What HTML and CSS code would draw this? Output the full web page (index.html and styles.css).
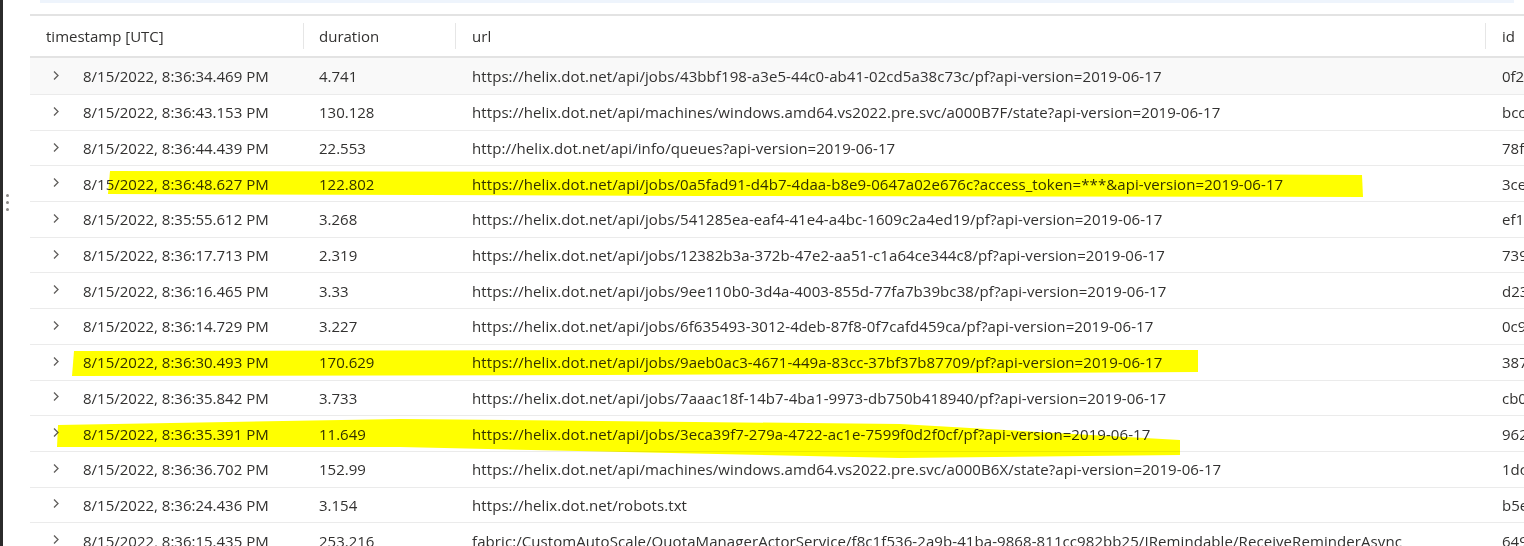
FILE: index.html
```html
<!DOCTYPE html>
<html>
<head>
<meta charset="utf-8">
<link rel="stylesheet" href="styles.css">
</head>
<body>
<div class="frame">
  <div class="edge"></div>
  <div class="handle"><span></span><span></span><span></span></div>
  <div class="main">
    <div class="topband"></div>
    <div class="grid">
      <div class="row head">
        <div class="c ts">timestamp [UTC]</div>
        <div class="c du"><i class="sep"></i>duration</div>
        <div class="c ur"><i class="sep"></i>url</div>
        <div class="c id"><i class="sep"></i>id</div>
      </div>
      <div class="row first"><div class="c ts"><svg class="chev" width="8" height="11" viewBox="0 0 8 11"><path d="M2 1.5 L6 5.5 L2 9.5"/></svg>8/15/2022, 8:36:34.469 PM</div><div class="c du">4.741</div><div class="c ur">https://helix.dot.net/api/jobs/43bbf198-a3e5-44c0-ab41-02cd5a38c73c/pf?api-version=2019-06-17</div><div class="c id">0f2</div></div>
      <div class="row"><div class="c ts"><svg class="chev" width="8" height="11" viewBox="0 0 8 11"><path d="M2 1.5 L6 5.5 L2 9.5"/></svg>8/15/2022, 8:36:43.153 PM</div><div class="c du">130.128</div><div class="c ur">https://helix.dot.net/api/machines/windows.amd64.vs2022.pre.svc/a000B7F/state?api-version=2019-06-17</div><div class="c id">bcc</div></div>
      <div class="row"><div class="c ts"><svg class="chev" width="8" height="11" viewBox="0 0 8 11"><path d="M2 1.5 L6 5.5 L2 9.5"/></svg>8/15/2022, 8:36:44.439 PM</div><div class="c du">22.553</div><div class="c ur">http://helix.dot.net/api/info/queues?api-version=2019-06-17</div><div class="c id">78f</div></div>
      <div class="row"><div class="c ts"><svg class="chev" width="8" height="11" viewBox="0 0 8 11"><path d="M2 1.5 L6 5.5 L2 9.5"/></svg>8/15/2022, 8:36:48.627 PM</div><div class="c du">122.802</div><div class="c ur">https://helix.dot.net/api/jobs/0a5fad91-d4b7-4daa-b8e9-0647a02e676c?access_token=***&amp;api-version=2019-06-17</div><div class="c id">3ce</div></div>
      <div class="row"><div class="c ts"><svg class="chev" width="8" height="11" viewBox="0 0 8 11"><path d="M2 1.5 L6 5.5 L2 9.5"/></svg>8/15/2022, 8:35:55.612 PM</div><div class="c du">3.268</div><div class="c ur">https://helix.dot.net/api/jobs/541285ea-eaf4-41e4-a4bc-1609c2a4ed19/pf?api-version=2019-06-17</div><div class="c id">ef1</div></div>
      <div class="row"><div class="c ts"><svg class="chev" width="8" height="11" viewBox="0 0 8 11"><path d="M2 1.5 L6 5.5 L2 9.5"/></svg>8/15/2022, 8:36:17.713 PM</div><div class="c du">2.319</div><div class="c ur">https://helix.dot.net/api/jobs/12382b3a-372b-47e2-aa51-c1a64ce344c8/pf?api-version=2019-06-17</div><div class="c id">739</div></div>
      <div class="row"><div class="c ts"><svg class="chev" width="8" height="11" viewBox="0 0 8 11"><path d="M2 1.5 L6 5.5 L2 9.5"/></svg>8/15/2022, 8:36:16.465 PM</div><div class="c du">3.33</div><div class="c ur">https://helix.dot.net/api/jobs/9ee110b0-3d4a-4003-855d-77fa7b39bc38/pf?api-version=2019-06-17</div><div class="c id">d23</div></div>
      <div class="row"><div class="c ts"><svg class="chev" width="8" height="11" viewBox="0 0 8 11"><path d="M2 1.5 L6 5.5 L2 9.5"/></svg>8/15/2022, 8:36:14.729 PM</div><div class="c du">3.227</div><div class="c ur">https://helix.dot.net/api/jobs/6f635493-3012-4deb-87f8-0f7cafd459ca/pf?api-version=2019-06-17</div><div class="c id">0c9</div></div>
      <div class="row"><div class="c ts"><svg class="chev" width="8" height="11" viewBox="0 0 8 11"><path d="M2 1.5 L6 5.5 L2 9.5"/></svg>8/15/2022, 8:36:30.493 PM</div><div class="c du">170.629</div><div class="c ur">https://helix.dot.net/api/jobs/9aeb0ac3-4671-449a-83cc-37bf37b87709/pf?api-version=2019-06-17</div><div class="c id">387</div></div>
      <div class="row"><div class="c ts"><svg class="chev" width="8" height="11" viewBox="0 0 8 11"><path d="M2 1.5 L6 5.5 L2 9.5"/></svg>8/15/2022, 8:36:35.842 PM</div><div class="c du">3.733</div><div class="c ur">https://helix.dot.net/api/jobs/7aaac18f-14b7-4ba1-9973-db750b418940/pf?api-version=2019-06-17</div><div class="c id">cb0</div></div>
      <div class="row"><div class="c ts"><svg class="chev" width="8" height="11" viewBox="0 0 8 11"><path d="M2 1.5 L6 5.5 L2 9.5"/></svg>8/15/2022, 8:36:35.391 PM</div><div class="c du">11.649</div><div class="c ur">https://helix.dot.net/api/jobs/3eca39f7-279a-4722-ac1e-7599f0d2f0cf/pf?api-version=2019-06-17</div><div class="c id">962</div></div>
      <div class="row"><div class="c ts"><svg class="chev" width="8" height="11" viewBox="0 0 8 11"><path d="M2 1.5 L6 5.5 L2 9.5"/></svg>8/15/2022, 8:36:36.702 PM</div><div class="c du">152.99</div><div class="c ur">https://helix.dot.net/api/machines/windows.amd64.vs2022.pre.svc/a000B6X/state?api-version=2019-06-17</div><div class="c id">1dc</div></div>
      <div class="row"><div class="c ts"><svg class="chev" width="8" height="11" viewBox="0 0 8 11"><path d="M2 1.5 L6 5.5 L2 9.5"/></svg>8/15/2022, 8:36:24.436 PM</div><div class="c du">3.154</div><div class="c ur">https://helix.dot.net/robots.txt</div><div class="c id">b5e</div></div>
      <div class="row"><div class="c ts"><svg class="chev" width="8" height="11" viewBox="0 0 8 11"><path d="M2 1.5 L6 5.5 L2 9.5"/></svg>8/15/2022, 8:36:15.435 PM</div><div class="c du">253.216</div><div class="c ur">fabric:/CustomAutoScale/QuotaManagerActorService/f8c1f536-2a9b-41ba-9868-811cc982bb25/IRemindable/ReceiveReminderAsync</div><div class="c id">649</div></div>
    </div>
  </div>
  <svg class="marker" width="1524" height="546" viewBox="0 0 1524 546">
    <path d="M110 171 L700 172 L1362 175 L1363 197 L700 196 L108 194 Z"/>
    <path d="M74 351 L600 350 L1198 350 L1198 372 L600 375 L72 376 Z"/>
    <path d="M58 425 L400 419 L900 424 L1180 440 L1180 455 L900 458 L400 447 L57 447 Z"/>
  </svg>
</div>
</body>
</html>
```

FILE: styles.css
```css
html, body {
  margin: 0;
  padding: 0;
  background: #ffffff;
}
body {
  font-family: "Open Sans", "Noto Sans", sans-serif;
  font-size: 15px;
  color: #323130;
  overflow: hidden;
}
.frame {
  position: relative;
  display: flex;
  width: 1524px;
  height: 546px;
  overflow: hidden;
}
.edge {
  width: 3px;
  flex: none;
  background: #2b2b2b;
}
.handle {
  position: absolute;
  left: 6px;
  top: 194px;
  display: flex;
  flex-direction: column;
  gap: 4px;
}
.handle span {
  width: 3px;
  height: 3px;
  border-radius: 50%;
  background: #8a8886;
}
.main {
  flex: 1;
  padding-left: 27px;
  display: flex;
  flex-direction: column;
}
.topband {
  flex: none;
  height: 3px;
  margin-left: 10px;
  margin-right: 14px;
  background: #eef4fc;
  margin-bottom: 11px;
}
.grid {
  flex: none;
  display: flex;
  flex-direction: column;
  border-top: 2px solid #e3e3e3;
}
.row {
  flex: none;
  display: flex;
  align-items: center;
  height: 35.7px;
  border-bottom: 1px solid #ebebeb;
  box-sizing: border-box;
  white-space: nowrap;
}
.row.head {
  height: 42px;
  border-bottom: 2px solid #e3e3e3;
}
.row.first {
  background: #f9f9f9;
  height: 37px;
}
.c {
  position: relative;
  flex: none;
  overflow: hidden;
  box-sizing: border-box;
  display: flex;
  align-items: center;
  line-height: 22px;
}
.ts { width: 273px; padding-left: 22px; }
.head .ts { padding-left: 16px; }
.du { width: 152px; padding-left: 16px; }
.ur { width: 1030px; padding-left: 17px; letter-spacing: 0.08px; }
.id { flex: 1; padding-left: 17px; }
.sep {
  position: absolute;
  left: 0;
  top: 0;
  width: 1px;
  height: 100%;
  background: #e6e6e6;
}
.head .c {
  height: 26px;
}
.chev {
  flex: none;
  margin-right: 23px;
  margin-top: -2px;
}
.chev path {
  fill: none;
  stroke: #605e5c;
  stroke-width: 1.3;
}
.marker {
  position: absolute;
  left: 0;
  top: 0;
  mix-blend-mode: multiply;
  pointer-events: none;
}
.marker path {
  fill: #ffff00;
}
```
